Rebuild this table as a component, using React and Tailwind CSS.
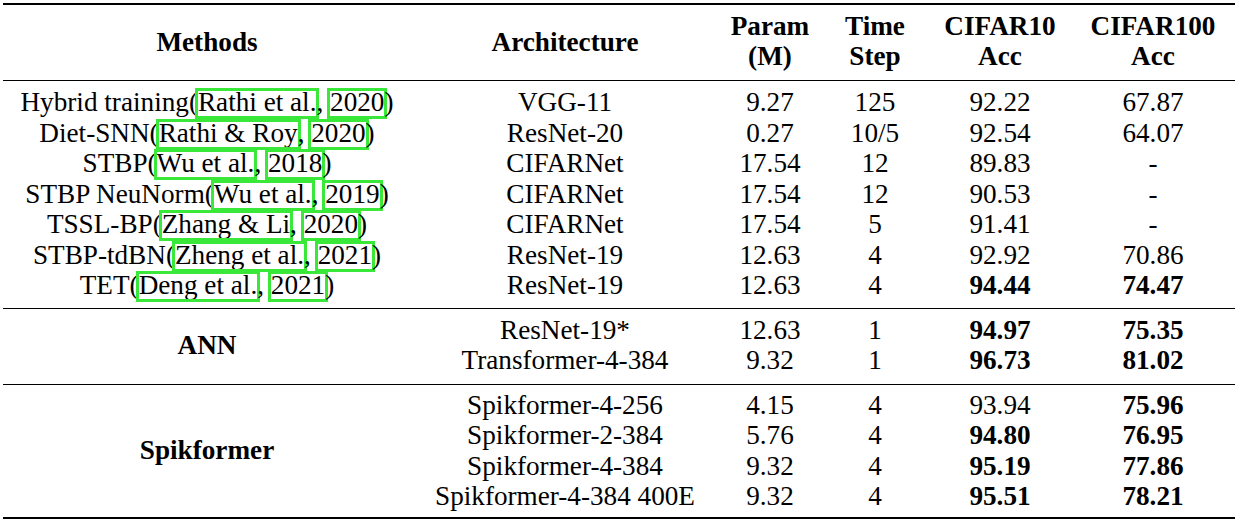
import clsx from 'clsx'

/* column widths of the results table */
const cols = 'grid grid-cols-[408px_308px_102px_108px_142px_164px]'

const priorWork = [
  { name: 'Hybrid training', author: 'Rathi et al.', year: '2020', arch: 'VGG-11', param: '9.27', step: '125', c10: '92.22', c100: '67.87' },
  { name: 'Diet-SNN', author: 'Rathi & Roy', year: '2020', arch: 'ResNet-20', param: '0.27', step: '10/5', c10: '92.54', c100: '64.07' },
  { name: 'STBP', author: 'Wu et al.', year: '2018', arch: 'CIFARNet', param: '17.54', step: '12', c10: '89.83', c100: '-' },
  { name: 'STBP NeuNorm', author: 'Wu et al.', year: '2019', arch: 'CIFARNet', param: '17.54', step: '12', c10: '90.53', c100: '-' },
  { name: 'TSSL-BP', author: 'Zhang & Li', year: '2020', arch: 'CIFARNet', param: '17.54', step: '5', c10: '91.41', c100: '-' },
  { name: 'STBP-tdBN', author: 'Zheng et al.', year: '2021', arch: 'ResNet-19', param: '12.63', step: '4', c10: '92.92', c100: '70.86' },
  { name: 'TET', author: 'Deng et al.', year: '2021', arch: 'ResNet-19', param: '12.63', step: '4', c10: '94.44', c100: '74.47', b10: true, b100: true },
]

const annRows = [
  { arch: 'ResNet-19*', param: '12.63', step: '1', c10: '94.97', c100: '75.35', b10: true, b100: true },
  { arch: 'Transformer-4-384', param: '9.32', step: '1', c10: '96.73', c100: '81.02', b10: true, b100: true },
]

const spikRows = [
  { arch: 'Spikformer-4-256', param: '4.15', step: '4', c10: '93.94', c100: '75.96', b100: true },
  { arch: 'Spikformer-2-384', param: '5.76', step: '4', c10: '94.80', c100: '76.95', b10: true, b100: true },
  { arch: 'Spikformer-4-384', param: '9.32', step: '4', c10: '95.19', c100: '77.86', b10: true, b100: true },
  { arch: 'Spikformer-4-384 400E', param: '9.32', step: '4', c10: '95.51', c100: '78.21', b10: true, b100: true },
]

function Cite({ children }) {
  return (
    <span className="inline-block leading-[22px] pb-[3px] outline-[3px] outline-solid outline-[#3ae83a]">
      {children}
    </span>
  )
}

function Cells({ row }) {
  return (
    <>
      <div className="text-center">{row.arch}</div>
      <div className="text-center">{row.param}</div>
      <div className="text-center">{row.step}</div>
      <div className={clsx('text-center', row.b10 && 'font-bold')}>{row.c10}</div>
      <div className={clsx('text-center', row.b100 && 'font-bold')}>{row.c100}</div>
    </>
  )
}

export default function App() {
  return (
    <div className="w-[1239px] h-[523px] bg-white text-black px-[3px] pt-[3px] font-['Liberation_Serif',serif] text-[27.2px] leading-[30.5px]">
      <div className="w-[1232px] h-[2px] bg-black" />

      {/* Header */}
      <div className={clsx(cols, 'pt-[6px] pb-[9px] font-bold leading-[30px] items-center text-center')}>
        <div className="pt-[2px]">Methods</div>
        <div className="pt-[2px]">Architecture</div>
        <div>Param<br />(M)</div>
        <div>Time<br />Step</div>
        <div>CIFAR10<br />Acc</div>
        <div>CIFAR100<br />Acc</div>
      </div>
      <div className="w-[1232px] h-px bg-black" />

      {/* Prior SNN methods */}
      <div className={clsx(cols, 'pt-[6px] pb-[7px]')}>
        {priorWork.map((r) => (
          <div key={r.name} className="contents">
            <div className="text-center whitespace-nowrap">
              {r.name}(<Cite>{r.author}</Cite>, <Cite>{r.year}</Cite>)
            </div>
            <Cells row={r} />
          </div>
        ))}
      </div>
      <div className="w-[1232px] h-px bg-black" />

      {/* ANN baselines */}
      <div className={clsx(cols, 'pt-[6px] pb-[8px]')}>
        <div className="row-span-2 flex items-center justify-center font-bold">ANN</div>
        {annRows.map((r) => (
          <div key={r.arch} className="contents">
            <Cells row={r} />
          </div>
        ))}
      </div>
      <div className="w-[1232px] h-px bg-black" />

      {/* Ours */}
      <div className={clsx(cols, 'pt-[5px] pb-[5px]')}>
        <div className="row-span-4 flex items-center justify-center font-bold">Spikformer</div>
        {spikRows.map((r) => (
          <div key={r.arch} className="contents">
            <Cells row={r} />
          </div>
        ))}
      </div>
      <div className="w-[1232px] h-[2px] bg-black" />
    </div>
  )
}
